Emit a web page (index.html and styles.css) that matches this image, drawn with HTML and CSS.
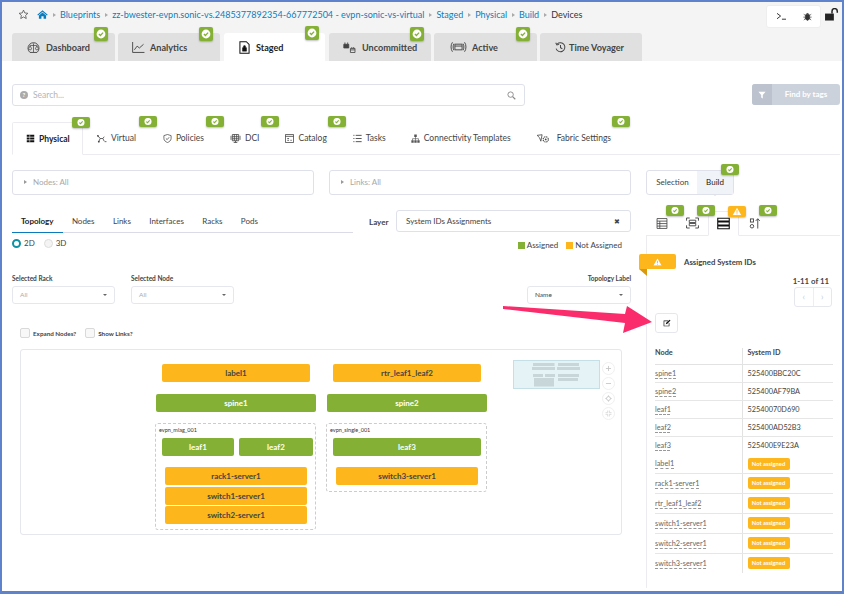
FILE: index.html
```html
<!DOCTYPE html>
<html lang="en">
<head>
<meta charset="utf-8">
<title>Devices</title>
<link rel="stylesheet" href="styles.css">
</head>
<body>
<svg class="sprite" width="0" height="0" aria-hidden="true">
  <symbol id="ok" viewBox="0 0 10 10"><circle cx="5" cy="5" r="4.4" fill="#fff"/><path d="M2.9 5.1 4.4 6.5 7.1 3.6" fill="none" stroke="#84b135" stroke-width="1.3"/></symbol>
  <symbol id="warn" viewBox="0 0 12 10"><path d="M6 .4 11.4 9.6H.6Z" fill="#fff"/><path d="M6 3.4V6.6M6 7.4V8.5" stroke="#fdb61c" stroke-width="1.2"/></symbol>
</svg>
<div class="frame">
  <header class="top">
    <div class="crumbs">
      <svg class="star" viewBox="0 0 12 12"><path d="M6 1.2 7.4 4.3 10.8 4.7 8.3 7 9 10.4 6 8.7 3 10.4 3.7 7 1.2 4.7 4.6 4.3Z" fill="none" stroke="#555" stroke-width=".9"/></svg>
      <svg class="home" viewBox="0 0 12 10"><path d="M6 .4 11.8 5.4 10.9 6.1 6 2 1.1 6.1.2 5.4ZM2 6.2 6 2.9 10 6.2V9.8H7.2V7H4.8V9.8H2Z" fill="#0a7cbd"/></svg>
      <i class="sep"></i><a>Blueprints</a><i class="sep"></i><a>zz-bwester-evpn.sonic-vs.2485377892354-667772504 - evpn-sonic-vs-virtual</a><i class="sep"></i><a>Staged</a><i class="sep"></i><a>Physical</a><i class="sep"></i><a>Build</a><i class="sep"></i><b>Devices</b>
      <div class="tools">
        <div class="toolbox">
          <svg viewBox="0 0 12 10"><path d="M1 1.5 5 4.5 1 7.5M6.5 8H11" fill="none" stroke="#222" stroke-width="1"/></svg>
          <svg class="bug" viewBox="0 0 10 10"><path d="M3 3H7L7.6 7.5 5 9.4 2.400 7.5ZM3.600 2.600A1.500 1.500 0 0 1 6.400 2.600ZM.8 2.500 3 4M9.200 2.500 7 4M.4 5.700H3M9.600 5.700H7M.9 9 2.800 7.400M9.100 9 7.200 7.400" fill="#333" stroke="#333" stroke-width=".7"/></svg>
        </div>
        <svg class="lock" viewBox="0 0 15 14"><path d="M0 6H9.500V13.500H0Z" fill="#222"/><path d="M7.500 6V3.500A2.800 2.800 0 0 1 13.200 3.500V5.200" fill="none" stroke="#222" stroke-width="1.600"/></svg>
      </div>
    </div>
    <nav class="tabs">
      <div class="tab">
        <svg viewBox="0 0 14 12"><path d="M3.200 11.400A6 6 0 1 1 10.800 11.400Z" fill="none" stroke="#444" stroke-width="1"/><path d="M7 1.500V11M3.500 3.800H10.500M1.600 7.500 3.300 4 5 7.500C4.500 9 2.100 9 1.600 7.500ZM9 7.500 10.700 4 12.400 7.500C11.900 9 9.500 9 9 7.500Z" fill="none" stroke="#444" stroke-width=".8"/></svg>
        Dashboard<svg class="badge tb"><use href="#ok"/></svg>
      </div>
      <div class="tab">
        <svg viewBox="0 0 14 12"><path d="M.6 0V11.400H13.500M2.500 8.500 5.500 4.500 8 6.500 12.500 2.500" fill="none" stroke="#444" stroke-width="1"/></svg>
        Analytics<svg class="badge tb"><use href="#ok"/></svg>
      </div>
      <div class="tab on">
        <svg class="doc" viewBox="0 0 12 14"><path d="M1 .6H8L11 3.600V13.400H1Z" fill="none" stroke="#111" stroke-width="1.100"/><path d="M3.800 7.200H8.200V11H3.800ZM4.800 7.200V6A1.200 1.200 0 0 1 7.200 6V7.200" fill="#111" stroke="#111" stroke-width=".5"/></svg>
        Staged<svg class="badge tb"><use href="#ok"/></svg>
      </div>
      <div class="tab">
        <svg viewBox="0 0 14 12"><path d="M.8 2.500H6.200V6.500H.8ZM2 2.500V.5M5 2.500V.5" fill="#444" stroke="#444" stroke-width=".9"/><path d="M8 7H13V11.500H8ZM8 8.600H13M9.500 7V5.600M11.500 7V5.600" fill="none" stroke="#444" stroke-width=".9"/></svg>
        Uncommitted<svg class="badge tb"><use href="#ok"/></svg>
      </div>
      <div class="tab">
        <svg class="wide" viewBox="0 0 18 12"><path d="M5.200 3H12.800V9H5.200ZM5.200 5H12.800M2.600 1C.6 3.500.6 8.500 2.600 11M4.200 2.500C3 4.500 3 7.500 4.200 9.500M15.400 1C17.400 3.500 17.400 8.500 15.400 11M13.800 2.500C15 4.500 15 7.500 13.800 9.500" fill="none" stroke="#444" stroke-width="1"/></svg>
        Active<svg class="badge tb"><use href="#ok"/></svg>
      </div>
      <div class="tab">
        <svg class="clock" viewBox="0 0 12 12"><path d="M2.400 2.200A4.900 4.900 0 1 1 1.200 7.200M.8 .8 2.100 3.200 4.600 2.600M6 3.200V6.200L8 7.400" fill="none" stroke="#444" stroke-width="1.100"/></svg>
        Time Voyager
      </div>
    </nav>
  </header>

  <main class="content">
    <div class="searchrow">
      <div class="search">
        <span class="help">?</span><span class="ph">Search...</span>
        <svg class="mag" viewBox="0 0 10 10"><circle cx="4" cy="4" r="3" fill="none" stroke="#888" stroke-width="1"/><path d="M6.200 6.200 9.200 9.200" stroke="#888" stroke-width="1.300"/></svg>
      </div>
      <div class="tagbtn">
        <span class="tagicon"><svg viewBox="0 0 10 10"><path d="M.5 1H9.500L6 5V9.500L4 8V5Z" fill="#fff"/></svg></span>
        <span class="taglabel">Find by tags</span>
      </div>
    </div>

    <nav class="subtabs">
      <div class="sub on">
        <svg viewBox="0 0 12 12"><path d="M1 1H11V3.600H1ZM1 4.700H11V7.300H1ZM1 8.400H11V11H1Z" fill="#111"/><path d="M5 1V11" stroke="#fff" stroke-width=".7"/></svg>
        Physical<svg class="badge sb"><use href="#ok"/></svg>
      </div>
      <div class="sub">
        <svg class="w11" viewBox="0 0 12 10"><path d="M2 2 4.500 5 3 8.500M4.500 5H7.500L9 3M7.500 5 9 8M9.500 8.500H11.500" fill="none" stroke="#444" stroke-width=".9"/><circle cx="2" cy="2" r="1" fill="#444"/><circle cx="3" cy="8.500" r="1" fill="#444"/></svg>
        Virtual<svg class="badge sb"><use href="#ok"/></svg>
      </div>
      <div class="sub">
        <svg viewBox="0 0 10 11"><path d="M5 .6 9.400 2V5.500C9.400 8 7 9.700 5 10.400 3 9.700.6 8 .6 5.500V2Z" fill="none" stroke="#444" stroke-width=".9"/><path d="M3 5.400 4.600 6.900 7 4" fill="none" stroke="#444" stroke-width=".9"/></svg>
        Policies<svg class="badge sb"><use href="#ok"/></svg>
      </div>
      <div class="sub">
        <svg class="w11" viewBox="0 0 11 10"><path d="M2 .6H9V7.500H2ZM.5 2V6.500M10.500 2V6.500M3.500 9.400H7.500M5.500 7.500V9.400M4.200 .6V7.500M6.800 .6V7.500M2 3H9M2 5.300H9" fill="none" stroke="#444" stroke-width=".9"/></svg>
        DCI<svg class="badge sb"><use href="#ok"/></svg>
      </div>
      <div class="sub">
        <svg viewBox="0 0 10 10"><path d="M.5.5H9.500V9.500H.5ZM.5 2.600H9.500M2.500 5H4.500M2.500 7H4.500M6 7H7.500" fill="none" stroke="#444" stroke-width=".9"/></svg>
        Catalog<svg class="badge sb"><use href="#ok"/></svg>
      </div>
      <div class="sub">
        <svg viewBox="0 0 10 10"><path d="M.4 1.500H1.600M3 1.500H9.600M.4 5H1.600M3 5H9.600M.4 8.500H1.600M3 8.500H9.600" stroke="#444" stroke-width="1"/></svg>
        Tasks
      </div>
      <div class="sub">
        <svg viewBox="0 0 10 10"><path d="M3.600.5H6.400V3.200H3.600ZM.4 7H3V9.600H.4ZM3.700 7H6.300V9.600H3.700ZM7 7H9.600V9.600H7Z" fill="#555"/><path d="M5 3V7M1.700 7V5.200H8.300V7" fill="none" stroke="#555" stroke-width=".7"/></svg>
        Connectivity Templates
      </div>
      <div class="sub fabric">
        <svg class="w14" viewBox="0 0 14 10"><path d="M.5 1.500 6 .8 4.600 8 3.200 4.200Z" fill="none" stroke="#444" stroke-width=".9"/><circle cx="10" cy="6" r="2.900" fill="none" stroke="#444" stroke-width="1.200" stroke-dasharray="1.500 .8"/><circle cx="10" cy="6" r="1" fill="#444"/></svg>
        Fabric Settings<svg class="badge sb fab"><use href="#ok"/></svg>
      </div>
    </nav>

    <div class="work">
      <section class="left">
        <div class="filters">
          <div class="filter"><i class="tri"></i>Nodes: All</div>
          <div class="filter"><i class="tri"></i>Links: All</div>
        </div>

        <div class="viewrow">
          <div class="vtabs">
            <span class="vtab on">Topology</span><span class="vtab">Nodes</span><span class="vtab">Links</span><span class="vtab">Interfaces</span><span class="vtab">Racks</span><span class="vtab">Pods</span>
          </div>
          <label class="layerlabel">Layer</label>
          <div class="layer">System IDs Assignments<span class="x">✖</span></div>
        </div>

        <div class="moderow">
          <div class="radios">
            <i class="radio on"></i><span>2D</span><i class="radio"></i><span>3D</span>
          </div>
          <div class="legend">
            <i class="sw green"></i><span>Assigned</span><i class="sw amber"></i><span>Not Assigned</span>
          </div>
        </div>

        <div class="selrow">
          <div class="field">
            <div class="flabel">Selected Rack</div>
            <div class="select">All<i class="caret"></i></div>
          </div>
          <div class="field">
            <div class="flabel">Selected Node</div>
            <div class="select">All<i class="caret"></i></div>
          </div>
          <div class="field right">
            <div class="flabel">Topology Label</div>
            <div class="select dark">Name<i class="caret"></i></div>
          </div>
        </div>

        <div class="checks">
          <i class="check"></i><span>Expand Nodes?</span><i class="check"></i><span>Show Links?</span>
        </div>

        <div class="canvas">
          <div class="node amber" style="left:141px;top:14px;width:148px">label1</div>
          <div class="node amber" style="left:312px;top:14px;width:148px">rtr_leaf1_leaf2</div>
          <div class="node green" style="left:135px;top:44px;width:160px">spine1</div>
          <div class="node green" style="left:306px;top:44px;width:160px">spine2</div>
          <div class="group" style="left:134px;top:73px;width:161px;height:107px"><span>evpn_mlag_001</span></div>
          <div class="group" style="left:305px;top:73px;width:161px;height:69px"><span>evpn_single_001</span></div>
          <div class="node green" style="left:141px;top:88px;width:72px">leaf1</div>
          <div class="node green" style="left:218px;top:88px;width:74px">leaf2</div>
          <div class="node green" style="left:312px;top:88px;width:148px">leaf3</div>
          <div class="node amber" style="left:144px;top:117px;width:142px">rack1-server1</div>
          <div class="node amber" style="left:144px;top:137px;width:142px">switch1-server1</div>
          <div class="node amber" style="left:144px;top:156px;width:142px">switch2-server1</div>
          <div class="node amber" style="left:315px;top:117px;width:142px">switch3-server1</div>
          <svg class="minimap" viewBox="0 0 87 29"><rect x=".5" y=".5" width="86" height="28" fill="#e5f3f6" stroke="#c4e0e6"/><path d="M20 3H41.500V6H20ZM19 7H42V10H19ZM45 3H66V6H45ZM44 7H67V10H44ZM20 14H30V17H20ZM32 14H42V17H32ZM45 14H66V17H45ZM45 18H65V21H45ZM21 18H41V26.500H21Z" fill="#c8d6da"/></svg>
          <div class="zoomctl">
            <span class="zb"><svg viewBox="0 0 13 13"><path d="M3.500 6.500H9.500M6.500 3.500V9.500" stroke="#c4c4c4"/></svg></span>
            <span class="zb"><svg viewBox="0 0 13 13"><path d="M3.500 6.500H9.500" stroke="#c4c4c4"/></svg></span>
            <span class="zb"><svg viewBox="0 0 13 13"><circle cx="6.500" cy="6.500" r="2.300" fill="none" stroke="#c4c4c4"/><path d="M6.500 2.800V4.200M6.500 8.800V10.200M2.800 6.500H4.200M8.800 6.500H10.200" stroke="#c4c4c4"/></svg></span>
            <span class="zb"><svg viewBox="0 0 13 13"><path d="M5.500 3V5.500H3M7.500 3V5.500H10M5.500 10V7.500H3M7.500 10V7.500H10" fill="none" stroke="#ccc" stroke-width=".8"/></svg></span>
          </div>
        </div>
      </section>

      <aside class="right">
        <div class="seg">
          <span class="segitem sel">Selection</span><span class="segitem on">Build<svg class="badge segb"><use href="#ok"/></svg></span>
        </div>
        <div class="ptabs">
          <div class="ptab">
            <svg viewBox="0 0 12 12"><path d="M.6.6H11.400V11.400H.6ZM.6 3.400H11.400M.6 6.100H11.400M.6 8.800H11.400M3.600 3.400V11.400" fill="none" stroke="#444" stroke-width=".9"/></svg>
            <svg class="badge pb"><use href="#ok"/></svg>
          </div>
          <div class="ptab">
            <svg viewBox="0 0 14 12"><path d="M.6 3.500V.6H4M10 .6H13.400V3.500M.6 8.500V11.400H4M10 11.400H13.400V8.500M3.500 3H10.500V5.500H3.500ZM3.500 6.500H10.500V9H3.500Z" fill="none" stroke="#444" stroke-width="1"/></svg>
            <svg class="badge pb"><use href="#ok"/></svg>
          </div>
          <div class="ptab on">
            <svg viewBox="0 0 14 13"><path d="M.8.8H13.200V4H.8ZM.8 4.900H13.200V8.100H.8ZM.8 9H13.200V12.200H.8Z" fill="none" stroke="#111" stroke-width="1.200"/></svg>
            <svg class="badge pb warnb"><use href="#warn"/></svg>
          </div>
          <div class="ptab">
            <svg viewBox="0 0 12 12"><rect x="1" y="1" width="3.400" height="3.400" fill="none" stroke="#444"/><circle cx="2.700" cy="9" r="1.900" fill="none" stroke="#444"/><path d="M9 11.500V1M6.800 3.200 9 .8 11.200 3.200" fill="none" stroke="#444"/></svg>
            <svg class="badge pb"><use href="#ok"/></svg>
          </div>
          <div class="ptabfill"></div>
        </div>
        <div class="pbody">
          <div class="phead">
            <div class="flag"><svg viewBox="0 0 12 10"><use href="#warn"/></svg></div>
            <span>Assigned System IDs</span>
          </div>
          <div class="pagewrap">
            <div class="count">1-11 of 11</div>
            <div class="pager"><span>‹</span><span>›</span></div>
          </div>
          <div class="editbtn"><svg viewBox="0 0 10 10"><path d="M.8 2H6.500V2.800H1.600V8.400H7.200V5H8V9.200H.8Z" fill="#111"/><path d="M3.500 6.500 4 4.600 8.200.8 9.400 2 5.400 6Z" fill="#111"/></svg></div>
          <table class="nodes">
            <thead><tr><th>Node</th><th>System ID</th></tr></thead>
            <tbody>
              <tr><td><u>spine1</u></td><td>525400BBC20C</td></tr>
              <tr><td><u>spine2</u></td><td>525400AF79BA</td></tr>
              <tr><td><u>leaf1</u></td><td>52540070D690</td></tr>
              <tr><td><u>leaf2</u></td><td>525400AD52B3</td></tr>
              <tr><td><u>leaf3</u></td><td>525400E9E23A</td></tr>
              <tr class="tall first"><td><u>label1</u></td><td><em>Not assigned</em></td></tr>
              <tr class="tall"><td><u>rack1-server1</u></td><td><em>Not assigned</em></td></tr>
              <tr class="tall"><td><u>rtr_leaf1_leaf2</u></td><td><em>Not assigned</em></td></tr>
              <tr class="tall"><td><u>switch1-server1</u></td><td><em>Not assigned</em></td></tr>
              <tr class="tall"><td><u>switch2-server1</u></td><td><em>Not assigned</em></td></tr>
              <tr class="tall"><td><u>switch3-server1</u></td><td><em>Not assigned</em></td></tr>
            </tbody>
          </table>
        </div>
      </aside>
    </div>
  </main>

  <svg class="arrow" viewBox="0 0 160 36"><path d="M1 1 123 9 125 1 150 17 121 28 123 18 1 4Z" fill="#fb2c6c"/></svg>
</div>
</body>
</html>
```
FILE: styles.css
```css
* { box-sizing: border-box; }
html, body { margin: 0; padding: 0; }
body { font-family: Lato, "Open Sans", sans-serif; color: #333; background: #fff; }
.sprite { position: absolute; }
.frame { position: relative; width: 844px; height: 594px; border: 2px solid #5f82cc; border-bottom-width: 3px; overflow: hidden; background: #fff; }

.top { height: 59px; background: #f4f4f4; }
.crumbs { display: flex; align-items: center; height: 27px; padding: 0 0 2px 16px; font-size: 9.020px; color: #0a7cbd; white-space: nowrap; }
.crumbs a { color: #0a7cbd; }
.crumbs b { font-weight: 400; color: #333; }
.star { width: 11px; height: 11px; margin-right: 8px; }
.home { width: 11px; height: 9px; }
.sep { width: 0; height: 0; margin: 0 4px 0 5px; border-left: 3px solid #aaa; border-top: 2.500px solid transparent; border-bottom: 2.500px solid transparent; }
.tools { display: flex; align-items: center; margin-left: auto; margin-right: 3px; }
.toolbox { display: flex; align-items: center; justify-content: space-between; width: 55px; height: 23px; padding: 0 8px 0 9px; margin-top: 4px; background: #fff; border-radius: 3px; border: 1px solid #eee; }
.toolbox svg { width: 11px; height: 9px; }
.toolbox svg.bug { width: 9px; }
.lock { width: 14px; height: 13px; margin-left: 4px; }

.tabs { display: flex; gap: 3px; height: 32px; padding: 4px 0 0 10px; }
.tab { position: relative; display: flex; align-items: center; gap: 6px; width: 103px; height: 28px; padding-left: 15px; background: #e0e0e0; border-radius: 3px 3px 0 0; font-size: 9.100px; font-weight: 700; color: #444; }
.tab:nth-child(2) { width: 102px; padding-left: 14px; gap: 5px; }
.tab:nth-child(3) { width: 101px; margin-left: 1px; }
.tab:nth-child(4) { width: 102px; margin-left: 1px; padding-left: 14px; }
.tab:nth-child(5) { padding-left: 16px; gap: 5px; }
.tab:nth-child(6) { width: 102px; gap: 3px; }
.tab svg { width: 13px; height: 11px; flex: none; }
.tab svg.wide { width: 17px; height: 12px; }
.tab svg.doc { width: 11px; height: 13px; }
.tab svg.clock { width: 11px; height: 11px; }
.tab.on { background: #fff; color: #222; }
svg.badge { position: absolute; z-index: 1; background: #84b135; border-radius: 2px; box-shadow: 0 1px 2px rgba(0,0,0,.25); padding: 2px; }
.tab svg.badge { width: 14px; height: 14px; top: -6px; right: 7px; padding: 2px; }
.tab.on svg.badge { top: -7px; right: 6px; }

.content { padding: 23px 2px 0 10px; }
.searchrow { display: flex; justify-content: space-between; }
.search { display: flex; align-items: center; width: 513px; height: 22px; padding: 0 8px 0 7px; border: 1px solid #dfe1ea; border-radius: 3px; background: #fff; }
.help { width: 8px; height: 8px; border-radius: 50%; background: #aaa; color: #fff; font-size: 6px; font-weight: 700; line-height: 8px; text-align: center; margin-right: 5px; }
.ph { font-size: 8.500px; color: #b5b5b5; }
.mag { width: 9px; height: 9px; margin-left: auto; }
.tagbtn { display: flex; width: 88px; height: 21px; background: #ccd2dc; border-radius: 3px; overflow: hidden; }
.tagicon { display: flex; align-items: center; justify-content: center; width: 20px; background: #bcc3cf; }
.tagicon svg { width: 8px; height: 8px; }
.taglabel { flex: 1; font-size: 8px; font-weight: 700; line-height: 20px; text-align: center; color: #fff; }

.subtabs { display: flex; height: 33px; margin-top: 16px; border-bottom: 1px solid #ececf0; font-size: 8.500px; color: #444; }
.sub { position: relative; display: flex; align-items: center; gap: 4px; height: 32px; margin-right: 22px; white-space: nowrap; }
.sub svg { width: 9px; height: 9px; flex: none; }
.sub svg.w11 { width: 11px; }
.sub svg.w14 { width: 14px; }
.sub.on { width: 71px; height: 33px; margin-right: 13px; padding-left: 13px; border: 1px solid #ececf0; border-bottom-color: #fff; border-radius: 2px 2px 0 0; font-weight: 700; color: #222; background: #fff; }
.sub.fabric { gap: 7px; }
.sub:nth-child(2) { margin-right: 23px; }
.sub:nth-child(6) { margin-right: 25px; }
.sub:nth-child(7) { margin-right: 25px; }
.sub svg.badge { width: 18px; height: 11px; top: -6px; left: 43px; padding: 1.500px 4px; }
.sub.on svg.badge { left: 59px; }
.sub:nth-child(4) svg.badge { left: 31px; }
.sub svg.fab { left: 76px; }

.work { display: flex; gap: 15px; padding-top: 15px; }
.left { width: 619px; }
.filters { display: flex; justify-content: space-between; }
.filter { display: flex; align-items: center; width: 302px; height: 25px; padding: 0 0 1px 11px; border: 1px solid #dfe1ea; border-radius: 3px; font-size: 8px; color: #a8a8a8; }
.tri { width: 0; height: 0; margin-right: 6px; border-left: 3px solid #999; border-top: 2.500px solid transparent; border-bottom: 2.500px solid transparent; }

.viewrow { display: flex; align-items: flex-end; height: 38px; }
.vtabs { display: flex; width: 341px; height: 23px; border-bottom: 1px solid #d9dce6; font-size: 8px; }
.vtab { height: 23px; padding: 0 9px; margin-right: .3px; line-height: 22px; color: #444; }
.vtab.on { font-weight: 700; color: #222; border-bottom: 1px solid #0a7cbd; }
.layerlabel { width: 43px; padding: 0 0 6px 16px; font-size: 8px; font-weight: 700; color: #444; white-space: nowrap; }
.layer { display: flex; align-items: center; justify-content: space-between; width: 235px; height: 22px; margin-bottom: 1px; padding: 0 10px 0 9px; border: 1px solid #dfe1ea; border-radius: 3px; font-size: 8px; color: #444; }
.x { font-size: 7px; color: #444; }

.moderow { display: flex; justify-content: space-between; height: 27px; padding: 4px 9px 0 0; font-size: 8px; color: #444; }
.radios, .legend, .checks { display: flex; align-items: center; }
.radios { height: 12px; }
.radio { width: 9px; height: 9px; margin-right: 3px; border-radius: 50%; border: 1px solid #ddd; background: #f4f4f4; }
.radio.on { border: 2.500px solid #0b93a5; background: #fff; }
.radios span { margin-right: 9px; }
.legend { height: 16px; }
.sw { width: 7px; height: 7px; margin: 0 2px 0 8px; }
.sw.green { background: #84b135; }
.sw.amber { background: #fdb61c; }

.selrow { display: flex; gap: 16px; padding-top: 14px; height: 59px; }
.field { width: 103px; }
.field.right { width: 104px; margin-left: auto; text-align: right; }
.flabel { font-size: 6.500px; font-weight: 700; color: #444; line-height: 9px; }
.select { position: relative; height: 18px; margin-top: 3px; padding-left: 7px; border: 1px solid #e6e7ee; border-radius: 3px; font-size: 6.500px; line-height: 16px; color: #aaa; text-align: left; }
.select.dark { color: #444; }
.caret { position: absolute; right: 7px; top: 7px; border-top: 2px solid #666; border-left: 2px solid transparent; border-right: 2px solid transparent; }

.checks { height: 23px; padding: 5px 0 0 8px; font-size: 6.300px; font-weight: 700; color: #444; }
.check { width: 10px; height: 10px; margin-right: 3px; border: 1px solid #d9d9d9; border-radius: 2px; background: #f8f8f8; }
.checks span { margin-right: 9px; }

.canvas { position: relative; width: 602px; height: 186px; margin: 7px 0 0 8px; border: 1px solid #e5e6ee; border-radius: 3px; }
.node { position: absolute; height: 18px; border-radius: 2px; font-size: 8px; font-weight: 700; line-height: 18px; text-align: center; }
.node.green { background: #84b135; color: #fff; }
.node.amber { background: #fdb61c; color: #444; }
.group { position: absolute; border: 1px dashed #ccc; border-radius: 3px; font-size: 5.500px; line-height: 8px; color: #333; padding: 2px 3px; }
.minimap { position: absolute; left: 492px; top: 10px; width: 87px; height: 29px; }
.zoomctl { position: absolute; left: 581px; top: 12px; display: flex; flex-direction: column; gap: 2px; }
.zb { display: block; width: 13px; height: 13px; border: 1px solid #f0f0f0; border-radius: 50%; overflow: hidden; }
.zb svg { display: block; width: 11px; height: 11px; }

.right { width: 194px; }
.seg { position: relative; display: flex; width: 88px; height: 25px; border: 1px solid #dfe1ea; border-radius: 3px; font-size: 8px; }
.segitem { position: relative; line-height: 23px; text-align: center; color: #444; }
.segitem.sel { width: 50px; padding-left: 1px; }
.segitem.on { width: 36px; background: #f0f3f8; color: #222; }
.segitem.on::after { content: ""; position: absolute; left: 15px; top: 23px; border-top: 2px solid #dfe1ea; border-left: 3px solid transparent; border-right: 3px solid transparent; }
.segitem svg.badge { width: 18px; height: 11px; top: -7px; right: -6px; padding: 1.500px 4px; }
.ptabs { display: flex; height: 41px; padding-top: 16px; }
.ptab { position: relative; display: flex; align-items: center; justify-content: center; width: 31px; height: 25px; border-bottom: 1px solid #ececf0; }
.ptab > svg:first-child { width: 12px; height: 11px; }
.ptab.on { border: 1px solid #ececf0; border-bottom-color: #fff; }
.ptab.on > svg:first-child { width: 13px; height: 13px; }
.ptab:nth-child(2) > svg:first-child { width: 13px; height: 12px; }
.ptabfill { flex: 1; border-bottom: 1px solid #ececf0; }
.ptab svg.badge { width: 18px; height: 11px; top: -6px; left: 20px; padding: 1.500px 4px; }
.ptab svg.warnb { left: 19px; background: #fdb61c; }
.pbody { position: relative; height: 352px; border-left: 1px solid #ececf0; padding: 18px 7px 0 0; }
.phead { display: flex; align-items: center; height: 15px; font-size: 7.800px; font-weight: 700; color: #444; }
.phead span { margin-left: 37px; }
.flag { position: absolute; left: -8px; top: 18px; display: flex; align-items: center; justify-content: center; width: 37px; height: 15px; background: #fdb61c; border-radius: 2px 2px 2px 0; }
.flag svg { width: 9px; height: 8px; }
.flag::after { content: ""; position: absolute; left: 0; top: 15px; border-top: 7px solid #d9980f; border-left: 8px solid transparent; }
.pagewrap { display: flex; flex-direction: column; align-items: flex-end; margin: 6px 1px 0 0; }
.count { margin-right: 3px; font-size: 7.800px; font-weight: 700; line-height: 12px; color: #444; white-space: nowrap; }
.pager { display: flex; width: 38px; height: 20px; border: 1px solid #e6e7ee; border-radius: 3px; color: #ccc; font-size: 9px; line-height: 17px; text-align: center; }
.pager span { flex: 1; }
.pager span + span { border-left: 1px solid #eee; }
.editbtn { display: flex; align-items: center; justify-content: center; width: 23px; height: 20px; margin: 6px 0 0 8px; border: 1px solid #e6e7ee; border-radius: 3px; }
.editbtn svg { width: 8px; height: 8px; }
.nodes { width: 178px; margin: 15px 0 0 8px; border-collapse: collapse; table-layout: fixed; font-size: 7.300px; color: #444; }
.nodes th { height: 16px; padding: 0 0 6px; font-weight: 700; text-align: left; border-bottom: 1px solid #e2e2e2; }
.nodes th:first-child, .nodes td:first-child { width: 87px; border-right: 1px solid #e2e2e2; }
.nodes th:last-child, .nodes td:last-child { padding-left: 5px; }
.nodes td { height: 18px; padding: 0; border-bottom: 1px solid #e6e6e6; white-space: nowrap; }
.nodes td:first-child { color: #666; }
.nodes tr:nth-child(5) td { border-bottom-color: transparent; }
.nodes tbody tr.tall td { height: 20px; }
.nodes tbody tr.first td { height: 19px; }
.nodes tr:last-child td { border-bottom: 0; }
.nodes u { text-decoration: underline dashed #999 .5px; text-underline-offset: 2px; }
.nodes em { display: inline-block; width: 42px; height: 12px; background: #fdb61c; border-radius: 2px; color: #fff; font-style: normal; font-weight: 700; font-size: 5.800px; line-height: 12px; text-align: center; vertical-align: middle; }

.arrow { position: absolute; left: 500px; top: 303px; width: 160px; height: 36px; }
```
